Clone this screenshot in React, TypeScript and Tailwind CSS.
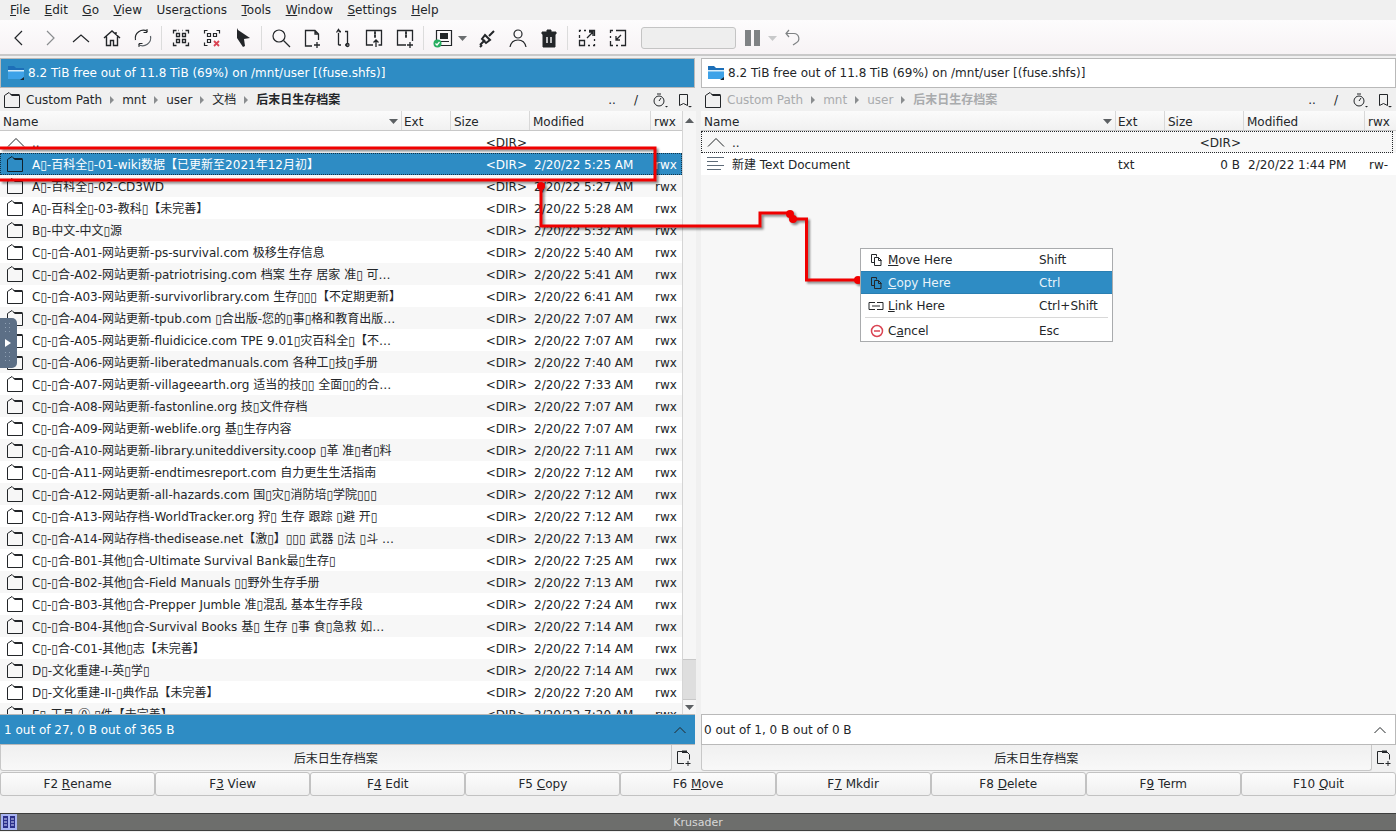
// App.tsx - Krusader window with a drag and drop menu
import type { ReactNode } from 'react';

const leftFiles = [
  ['A▯-百科全▯-01-wiki数据【已更新至2021年12月初】', '5:25'],
  ['A▯-百科全▯-02-CD3WD', '5:27'],
  ['A▯-百科全▯-03-教科▯【未完善】', '5:28'],
  ['B▯-中文-中文▯源', '5:32'],
  ['C▯-▯合-A01-网站更新-ps-survival.com 极移生存信息', '5:40'],
  ['C▯-▯合-A02-网站更新-patriotrising.com 档案 生存 居家 准▯ 可…', '5:41'],
  ['C▯-▯合-A03-网站更新-survivorlibrary.com 生存▯▯▯【不定期更新】', '6:41'],
  ['C▯-▯合-A04-网站更新-tpub.com ▯合出版-您的▯事▯格和教育出版…', '7:07'],
  ['C▯-▯合-A05-网站更新-fluidicice.com TPE 9.01▯灾百科全▯【不…', '7:07'],
  ['C▯-▯合-A06-网站更新-liberatedmanuals.com 各种工▯技▯手册', '7:40'],
  ['C▯-▯合-A07-网站更新-villageearth.org 适当的技▯▯ 全面▯▯的合…', '7:33'],
  ['C▯-▯合-A08-网站更新-fastonline.org 技▯文件存档', '7:07'],
  ['C▯-▯合-A09-网站更新-weblife.org 基▯生存内容', '7:07'],
  ['C▯-▯合-A10-网站更新-library.uniteddiversity.coop ▯革 准▯者▯料', '7:11'],
  ['C▯-▯合-A11-网站更新-endtimesreport.com 自力更生生活指南', '7:12'],
  ['C▯-▯合-A12-网站更新-all-hazards.com 国▯灾▯消防培▯学院▯▯▯', '7:12'],
  ['C▯-▯合-A13-网站存档-WorldTracker.org 狩▯ 生存 跟踪 ▯避 开▯', '7:12'],
  ['C▯-▯合-A14-网站存档-thedisease.net【激▯】▯▯▯ 武器 ▯法 ▯斗 …', '7:13'],
  ['C▯-▯合-B01-其他▯合-Ultimate Survival Bank最▯生存▯', '7:25'],
  ['C▯-▯合-B02-其他▯合-Field Manuals ▯▯野外生存手册', '7:13'],
  ['C▯-▯合-B03-其他▯合-Prepper Jumble 准▯混乱 基本生存手段', '7:24'],
  ['C▯-▯合-B04-其他▯合-Survival Books 基▯ 生存 ▯事 食▯急救 如…', '7:14'],
  ['C▯-▯合-C01-其他▯志【未完善】', '7:14'],
  ['D▯-文化重建-I-英▯学▯', '7:14'],
  ['D▯-文化重建-II-▯典作品【未完善】', '7:20'],
  ['E▯-工具 ⓪ ▯件【未完善】', '7:20'],
];

function Svg({ w = 22, h = 22, children }: { w?: number; h?: number; children: ReactNode }) {
  return (
    <svg width={w} height={h} viewBox={`0 0 ${w} ${h}`} fill="none" stroke="#232629" strokeWidth="1" className="shrink-0">
      {children}
    </svg>
  );
}

function FolderIcon({ color = '#232629' }: { color?: string }) {
  return (
    <svg width="16" height="16" viewBox="0 0 16 16" fill="none" stroke={color} className="shrink-0">
      <path d="M.5 15.5V3.5L5 .5l3 3h7.5v12z" />
      <path d="M6 2h9.5v2H8z" fill={color} stroke="none" />
    </svg>
  );
}

function BlueFolder() {
  return (
    <svg width="18" height="18" viewBox="0 0 18 18" className="shrink-0">
      <path d="M1 2h6l2 2h8v3H1z" fill="#1d6fb8" />
      <path d="M1 6h16v9H1z" fill="#3da2e8" />
      <path d="M1 6h16v1.5H1z" fill="#d6ecfa" />
      <path d="M13 16l4-3v3z" fill="#1c2730" />
    </svg>
  );
}

function Up() {
  return (
    <svg width="18" height="10" viewBox="0 0 18 10" fill="none" stroke="#232629" className="shrink-0">
      <path d="M1 9.5L9 1.5l8 8" />
    </svg>
  );
}

function UpSmall() {
  return (
    <svg width="12" height="8" viewBox="0 0 12 8" fill="none" stroke="#232629" className="shrink-0">
      <path d="M.5 7L6 1.500 11.500 7" />
    </svg>
  );
}

const toolIcons: Record<string, ReactNode> = {
  back: <path d="M14 4L7 11l7 7" strokeWidth="1.2" />,
  forward: <path d="M8 4l7 7-7 7" stroke="#8a8d8f" strokeWidth="1.2" />,
  up: <path d="M3 15l8-7 8 7" strokeWidth="1.2" />,
  home: <path d="M3 11l8-7 8 7M5.5 9.5v9h4v-5h3v5h4v-9M15 5v3" strokeWidth="1.4" />,
  reload: <><path d="M3.5 13a8 8 0 0 1 12-8.500" strokeWidth="1.2" /><path d="M18.500 9a8 8 0 0 1-12 8.500" stroke="#5a6066" strokeWidth="1.2" /><path d="M15 2v3.500h-3.500M7 20v-3.500h3.500" /></>,
  select: <path d="M3.500 6.500v-3h3M15.500 3.500h3v3M3.500 15.500v3h3M18.500 15.500v3h-3M9 3.500h-.5M13 3.500h-.5M6.500 6.500h3v3h-3zM12.500 6.500h3v3h-3zM6.500 12.500h3v3h-3zM12.500 12.500h3v3h-3z" strokeWidth="1.3" />,
  unselect: <><path d="M3.500 6.500v-3h3M15.500 3.500h3v3M3.500 15.500v3h3M6.500 6.500h3v3h-3zM12.500 6.500h3v3h-3zM6.500 12.500h3v3h-3z" strokeWidth="1.2" /><path d="M13 14l5 5m0-5l-5 5" stroke="#da4453" strokeWidth="1.800" /></>,
  invert: <path d="M5 1l1 2 12 8-6 1 1 7-2 1-6-9z" fill="#232629" stroke="none" />,
  search: <><circle cx="9" cy="9" r="6" strokeWidth="1.2" /><path d="M13.5 13.5L20 20" strokeWidth="1.2" /></>,
  newfile: <path d="M11 19H4.500V3.500H14L17.500 7v6M14 3.500V7h3.500M16 15v6M13 18h6" strokeWidth="1.3" />,
  sync: <path d="M6.500 4.500H9M13 4.500h2.500V16M6.500 6v12M6.500 18H9M13 18h2.500M4.500 5.500l2-3 2 3M15.500 19.500a1.500 1.500 0 1 0 0-3 1.500 1.500 0 1 0 0 3z" strokeWidth="1.3" />,
  packup: <path d="M10 18H3.500V3.500h15V18h-3M12 4v7M11 6h2M11 9h2M13 20v-7M10.500 15.500L13 13l2.500 2.500" strokeWidth="1.3" />,
  packadd: <path d="M12 18H3.500V3.500h15V14M12 4v7M11 6h2M11 9h2M16 15v6M13 18h6" strokeWidth="1.3" />,
  mount: <><path d="M4.500 3.500h15v15h-15z" strokeWidth="1.2" /><path d="M8 6h8v6h-8z" fill="#232629" stroke="none" /><path d="M7 14.500h10" /><circle cx="5.500" cy="16.500" r="4" fill="#27ae60" stroke="none" /><path d="M3.500 16.500l1.500 1.500 2.500-3" stroke="#fff" strokeWidth="1.200" /></>,
  plug: <path d="M18 4l-5 5M4 18l5-5M9 8l5 5-4 3-4-4zM6 18l-2 2" strokeWidth="2" />,
  user: <><circle cx="11" cy="7" r="4" strokeWidth="1.200" /><path d="M3 20c1-5 4-7 8-7s7 2 8 7" strokeWidth="1.200" /></>,
  trash: <><path d="M4 5h14v2H4zM9 3h4v2H9z" fill="#232629" /><path d="M5 7h12v13H5z" fill="#232629" /><path d="M9 10v6M13 10v6" stroke="#fff" strokeWidth="1.400" /></>,
  expand: <path d="M3.500 5V3.500H5M8 3.500h2M13 3.500h5.500V9M18.500 12v2M18.500 17v1.500H17M3.500 8v3M3.500 13.500h5v5h-5zM11 11l6-6M13 5h4v4M12 18.500h2" strokeWidth="1.300" />,
  shrink: <path d="M6 3.500H3.500V6M3.500 9v2M3.500 14v4.500H6M9 18.500h2M9 3.500h9.500v15H14M14 8l-5 5M9 9v4h4" strokeWidth="1.300" />,
};

function ToolIcon({ name }: { name: string }) {
  return (
    <div className="w-[31px] h-[24px] flex items-center justify-center shrink-0">
      <Svg>{toolIcons[name]}</Svg>
    </div>
  );
}

const Sep = () => (
  <div className="w-[7px] h-[24px] flex justify-center shrink-0">
    <div className="w-px h-full bg-[#dcdcdc]" />
  </div>
);

const Caret = ({ color = '#6b6e70' }: { color?: string }) => (
  <svg width="9" height="5" viewBox="0 0 9 5" className="shrink-0">
    <path d="M0 0h9L4.500 5z" fill={color} />
  </svg>
);

function Toolbar() {
  return (
    <div className="h-[36px] mt-[1px] pt-[2px] flex items-center pl-[3px] bg-gradient-to-b from-[#fdfcfd] to-[#f7f3f5] border-b-2 border-[#c9c9c9]">
      <ToolIcon name="back" />
      <ToolIcon name="forward" />
      <ToolIcon name="up" />
      <ToolIcon name="home" />
      <ToolIcon name="reload" />
      <Sep />
      <ToolIcon name="select" />
      <ToolIcon name="unselect" />
      <ToolIcon name="invert" />
      <Sep />
      <ToolIcon name="search" />
      <ToolIcon name="newfile" />
      <ToolIcon name="sync" />
      <ToolIcon name="packup" />
      <ToolIcon name="packadd" />
      <Sep />
      <ToolIcon name="mount" />
      <div className="w-[9px] flex justify-start shrink-0"><Caret /></div>
      <div className="w-[4px]" />
      <ToolIcon name="plug" />
      <ToolIcon name="user" />
      <ToolIcon name="trash" />
      <Sep />
      <ToolIcon name="expand" />
      <ToolIcon name="shrink" />
      <div className="w-[95px] h-[22px] ml-[8px] rounded-[3px] border border-[#c4c4c4] bg-[#eeeeee]" />
      <div className="ml-[9px] flex gap-[3px]">
        <div className="w-[6px] h-[16px] bg-[#7f8284]" />
        <div className="w-[6px] h-[16px] bg-[#7f8284]" />
      </div>
      <div className="ml-[8px]"><Caret color="#c8c9ca" /></div>
      <div className="ml-[5px]">
        <Svg>
          <path d="M7 3L4 6.500 7 10M4.500 6.500H12a5 5 0 0 1 2 9.500L11 18" stroke="#7f8284" strokeWidth="1.200" />
        </Svg>
      </div>
    </div>
  );
}

function PathBar({ inactive }: { inactive?: boolean }) {
  const tone = inactive ? 'text-[#a9abad]' : 'text-[#232629]';
  const crumbs = inactive ? ['Custom Path', 'mnt', 'user'] : ['Custom Path', 'mnt', 'user', '文档'];
  return (
    <div className="h-[23px] flex items-center pl-[4px] shrink-0">
      <FolderIcon />
      <div className={`flex items-center ml-[6px] ${tone}`}>
        {crumbs.map((c) => (
          <span key={c} className="flex items-center">
            {c}
            <span className="mx-[8px] w-0 h-0 border-y-[4px] border-y-transparent border-l-[4px] border-l-[#8a8d8f]" />
          </span>
        ))}
        <span className={`font-bold ${inactive ? 'text-[#a9abad]' : 'text-[#232629]'}`}>后末日生存档案</span>
      </div>
      <div className="ml-auto flex items-center text-[#232629]">
        <span className="w-[24px] text-center">..</span>
        <span className="w-[24px] text-center">/</span>
        <span className="w-[24px] flex justify-center">
          <svg width="16" height="16" viewBox="0 0 16 16" fill="none" stroke="#232629">
            <circle cx="7" cy="9" r="5" />
            <path d="M5 2h4M7 9l2-3" />
            <path d="M13 14h3l-1.500 1.500z" fill="#232629" stroke="none" />
          </svg>
        </span>
        <span className="w-[24px] flex justify-center">
          <svg width="16" height="16" viewBox="0 0 16 16" fill="none" stroke="#232629">
            <path d="M3.500 2.500h8v11l-4-2-4 2z" />
            <path d="M12 14h4l-2 1.500z" fill="#232629" stroke="none" />
          </svg>
        </span>
      </div>
    </div>
  );
}

function Headers({ nameW }: { nameW: number }) {
  return (
    <div className="h-[20px] flex shrink-0 bg-gradient-to-b from-[#fbfbfb] to-[#f1f1f1] border-b border-[#c8c8c8] text-[#232629]">
      <div style={{ width: nameW }} className="flex items-center justify-between pt-[2px] pl-[3px] pr-[3px] border-r border-[#d8d8d8]">
        Name
        <Caret color="#5c6063" />
      </div>
      <div className="w-[49px] pl-[2px] pt-[2px] flex items-center border-r border-[#d8d8d8]">Ext</div>
      <div className="w-[79px] pl-[3px] pt-[2px] flex items-center border-r border-[#d8d8d8]">Size</div>
      <div className="w-[121px] pl-[3px] pt-[2px] flex items-center border-r border-[#d8d8d8]">Modified</div>
      <div className="flex-1 pl-[3px] pt-[2px] flex items-center">rwx</div>
    </div>
  );
}

function Row({ i, name, time, selected }: { i: number; name: string; time: string; selected?: boolean }) {
  const bg = selected
    ? 'bg-[#2e8cc4] text-white outline-1 outline-dotted outline-offset-[-1px] outline-[#12344a]'
    : i % 2 === 0
      ? 'bg-[#f7f7f7] text-[#232629]'
      : 'bg-white text-[#232629]';
  return (
    <div className={`h-[22px] flex items-center shrink-0 ${bg}`}>
      <div className="w-[402px] flex items-center pl-[7px] shrink-0">
        <FolderIcon color={selected ? '#10222e' : '#232629'} />
        <span className="ml-[9px] pt-[2px] whitespace-nowrap">{name}</span>
      </div>
      <div className="w-[49px] shrink-0" />
      <div className="w-[79px] text-right pr-[3px] pt-[2px] shrink-0">&lt;DIR&gt;</div>
      <div className="w-[121px] pl-[4px] pt-[2px] shrink-0 whitespace-nowrap">2/20/22 {time} AM</div>
      <div className="flex-1 pl-[4px] pt-[2px]">rwx</div>
    </div>
  );
}

function LeftPanel() {
  return (
    <div className="w-[696px] flex flex-col shrink-0">
      <div className="h-[30px] flex items-center pl-[6px] gap-[3px] bg-[#2e8cc4] text-white border border-[#b9b9b9] mr-[1px] shrink-0">
        <BlueFolder />
        <span>8.2 TiB free out of 11.8 TiB (69%) on /mnt/user [(fuse.shfs)]</span>
      </div>
      <PathBar />
      <div className="flex-1 flex min-h-0">
        <div className="flex-1 flex flex-col min-w-0">
          <Headers nameW={402} />
          <div className="flex-1 bg-white overflow-hidden flex flex-col">
            <div className="h-[22px] flex items-center shrink-0 bg-white">
              <div className="w-[402px] flex items-center pl-[7px] shrink-0">
                <Up />
                <span className="ml-[7px] pt-[2px]">..</span>
              </div>
              <div className="w-[49px] shrink-0" />
              <div className="w-[79px] text-right pr-[3px] pt-[2px] shrink-0">&lt;DIR&gt;</div>
            </div>
            {leftFiles.map(([n, t], i) => (
              <Row key={n} i={i + 1} name={n} time={t} selected={i === 0} />
            ))}
          </div>
        </div>
        <div className="w-[14px] flex flex-col bg-[#f6f6f6] border-l border-[#d5d5d5] shrink-0">
          <div className="h-[20px] flex items-center justify-center rotate-180"><Caret color="#5c6063" /></div>
          <div className="flex-1" />
          <div className="h-[41px] bg-[#dedede] border-y border-[#c8c8c8]" />
          <div className="h-[14px] flex items-center justify-center"><Caret color="#5c6063" /></div>
        </div>
      </div>
      <div className="h-[31px] flex items-center justify-between pl-[4px] pr-[9px] bg-[#2e8cc4] text-white border-y border-[#b9b9b9] mr-[1px] shrink-0">
        <span className="pt-[1px]">1 out of 27, 0 B out of 365 B</span>
        <UpSmall />
      </div>
    </div>
  );
}

function RightPanel() {
  return (
    <div className="flex-1 flex flex-col min-w-0">
      <div className="h-[30px] flex items-center pl-[5px] gap-[3px] bg-white text-[#232629] border border-[#b9b9b9] shrink-0">
        <BlueFolder />
        <span>8.2 TiB free out of 11.8 TiB (69%) on /mnt/user [(fuse.shfs)]</span>
      </div>
      <PathBar inactive />
      <Headers nameW={415} />
      <div className="flex-1 bg-[#f7f7f7] text-[#232629] flex flex-col">
        <div className="h-[22px] flex items-center shrink-0 outline-1 outline-dotted outline-offset-[-1px] outline-[#232629] mr-[3px]">
          <div className="w-[415px] flex items-center pl-[6px] shrink-0">
            <Up />
            <span className="ml-[7px] pt-[2px]">..</span>
          </div>
          <div className="w-[49px] shrink-0" />
          <div className="w-[79px] text-right pr-[3px] pt-[2px] shrink-0">&lt;DIR&gt;</div>
        </div>
        <div className="h-[22px] flex items-center shrink-0 bg-white">
          <div className="w-[415px] flex items-center pl-[6px] shrink-0">
            <svg width="18" height="16" viewBox="0 0 18 16" stroke="#5e6b78" fill="none" className="shrink-0">
              <path d="M0 1.500h17M0 5.500h11M0 9.500h17M0 13.500h14" />
            </svg>
            <span className="ml-[7px] pt-[2px]">新建 Text Document</span>
          </div>
          <div className="w-[49px] pl-[2px] pt-[2px] shrink-0">txt</div>
          <div className="w-[79px] text-right pr-[4px] pt-[2px] shrink-0">0 B</div>
          <div className="w-[121px] pl-[4px] pt-[2px] shrink-0">2/20/22 1:44 PM</div>
          <div className="flex-1 pl-[4px] pt-[2px]">rw-</div>
        </div>
      </div>
      <div className="h-[31px] flex items-center justify-between pl-[2px] pr-[9px] bg-white text-[#232629] border border-[#b9b9b9] shrink-0">
        <span className="pt-[1px]">0 out of 1, 0 B out of 0 B</span>
        <UpSmall />
      </div>
    </div>
  );
}

function CmdBox() {
  const icon = (
    <svg width="16" height="16" viewBox="0 0 16 16" fill="none" stroke="#232629">
      <path d="M8 13.500H1.500V1.500h9l3 3v5" />
      <path d="M6 0.500h5V3H6z" fill="#232629" stroke="none" />
      <path d="M12 11v5M9.500 13.500h5" />
    </svg>
  );
  return (
    <div className="flex-1 h-full flex min-w-0">
      <div className="flex-1 flex items-center justify-center pt-[2px] rounded-b-[3px] border border-t-0 border-[#c8c8c8] bg-gradient-to-b from-[#f0f0f0] to-[#f8f8f8] text-[#232629]">
        后末日生存档案
      </div>
      <div className="w-[24px] flex items-center justify-center shrink-0">{icon}</div>
    </div>
  );
}

const fnKeys: [string, string, string][] = [
  ['F2 ', 'R', 'ename'],
  ['F', '3', ' View'],
  ['F', '4', ' Edit'],
  ['F5 ', 'C', 'opy'],
  ['F6 ', 'M', 'ove'],
  ['F', '7', ' Mkdir'],
  ['F8 ', 'D', 'elete'],
  ['F', '9', ' Term'],
  ['F10 ', 'Q', 'uit'],
];

function ContextMenu() {
  return (
    <div className="absolute left-[860px] top-[248px] w-[253px] h-[94px] bg-white border border-[#a9abad] text-[#232629]">
      <MenuItem label="M" rest="ove Here" keys="Shift" icon="copy" top />
      <MenuItem label="C" rest="opy Here" keys="Ctrl" icon="copy" active />
      <MenuItem label="L" rest="ink Here" keys="Ctrl+Shift" icon="link" />
      <div className="h-px bg-[#d8d8d8] mx-[4px] mb-[1px]" />
      <MenuItem first="C" label="a" rest="ncel" keys="Esc" icon="cancel" />
    </div>
  );
}

function MenuItem({ first, label, rest, keys, icon, active, top }: { first?: string; label: string; rest: string; keys: string; icon: string; active?: boolean; top?: boolean }) {
  return (
    <div className={`${top ? 'h-[22px] pb-[1px]' : 'h-[23px]'} flex items-center ${active ? 'bg-[#2e8cc4] text-[#e8f3fa] border-y border-[#2a7fb2]' : ''}`}>
      <div className="w-[27px] flex justify-center pl-[4px] shrink-0">
        {icon === 'copy' && (
          <svg width="14" height="14" viewBox="0 0 14 14" fill="none" stroke="#232629">
            <path d="M1.500 1.500h5l0 2M4.500 4.500h4l2.500 2.500v5.500h-6.500zM1.500 1.500v8h3" />
            <path d="M8.500 4.500v3h3" />
          </svg>
        )}
        {icon === 'link' && (
          <svg width="16" height="10" viewBox="0 0 16 10" fill="none" stroke="#232629" className="-ml-[2px]">
            <path d="M7 1.500H1v7h6M9 1.500h6v7H9M4 5h8" />
          </svg>
        )}
        {icon === 'cancel' && (
          <svg width="14" height="14" viewBox="0 0 14 14" fill="none" stroke="#da4453" strokeWidth="1.500">
            <circle cx="7" cy="7" r="5.500" />
            <path d="M4 7h6" />
          </svg>
        )}
      </div>
      <div className="w-[151px] shrink-0">
        {first}
        <u>{label}</u>
        {rest}
      </div>
      <div>{keys}</div>
    </div>
  );
}

function DragOverlay() {
  return (
    <svg width="1396" height="832" viewBox="0 0 1396 832" fill="none" className="absolute inset-0 pointer-events-none drop-shadow-[2px_2px_1px_rgba(0,0,0,0.45)]">
      <path d="M0 148H655V180H0" stroke="#f00000" strokeWidth="3" />
      <path d="M541 185V226H760V213H790" stroke="#f00000" strokeWidth="3" />
      <path d="M794 219H806.500V280H860" stroke="#f00000" strokeWidth="3" />
      <circle cx="541" cy="186" r="4" fill="#f00000" />
      <circle cx="790" cy="214" r="4" fill="#f00000" />
      <circle cx="793" cy="219" r="4" fill="#f00000" />
      <circle cx="858" cy="280" r="4" fill="#f00000" />
      <path d="M860 280h12" stroke="#f00000" strokeWidth="3" />
    </svg>
  );
}

function SideHandle() {
  return (
    <div className="absolute left-0 top-[318px] w-[17px] h-[50px] rounded-r-[5px] bg-[#5c6f86] flex items-center justify-center">
      <svg width="17" height="50" viewBox="0 0 17 50">
        <path d="M5 5h1v1H5zM9 5h1v1H9zM5 9h1v1H5zM9 9h1v1H9zM5 13h1v1H5zM9 13h1v1H9zM5 34h1v1H5zM9 34h1v1H9zM5 38h1v1H5zM9 38h1v1H9zM5 42h1v1H5zM9 42h1v1H9z" fill="#8fa0b3" />
        <path d="M5 21l6 4-6 4z" fill="#fff" />
      </svg>
    </div>
  );
}

export default function App() {
  return (
    <div className="relative w-[1396px] h-[832px] overflow-hidden flex flex-col bg-[#f0f0f0] text-[12px] leading-none text-[#232629] font-['DejaVu_Sans','Noto_Sans_CJK_SC',sans-serif]">
      <div className="h-[19px] pt-[1px] flex items-center pl-[10px] gap-[14.5px] shrink-0">
        <span><u>F</u>ile</span>
        <span><u>E</u>dit</span>
        <span><u>G</u>o</span>
        <span><u>V</u>iew</span>
        <span>User<u>a</u>ctions</span>
        <span><u>T</u>ools</span>
        <span><u>W</u>indow</span>
        <span><u>S</u>ettings</span>
        <span><u>H</u>elp</span>
      </div>
      <Toolbar />
      <div className="h-[687px] flex mt-[2px] shrink-0">
        <LeftPanel />
        <div className="w-[5px] shrink-0" />
        <RightPanel />
      </div>
      <div className="h-[26px] flex gap-[5px] shrink-0">
        <CmdBox />
        <CmdBox />
      </div>
      <div className="h-[24px] flex mt-[1px] shrink-0">
        {fnKeys.map(([a, u, b]) => (
          <div key={a + u} className="flex-1 flex items-center justify-center whitespace-pre rounded-[3px] border border-[#c2c2c2] bg-gradient-to-b from-[#fcfcfc] to-[#f0f0f0]">
            {a}<u>{u}</u>{b}
          </div>
        ))}
      </div>
      <div className="h-[18px] mt-[17px] flex items-center justify-center relative bg-[#6d6e6c] border-y border-[#3d3e3d] text-[#d8d8d8] text-[11px] shrink-0">
        <svg width="16" height="16" viewBox="0 0 16 16" className="absolute left-[1px] top-0">
          <path d="M0 0h16v16H0z" fill="#a9b4f2" />
          <path d="M2 2h5v12H2zM9 2h5v12H9z" fill="#2b2f8a" />
          <path d="M3 5h3M3 8h3M3 11h3M10 5h3M10 8h3M10 11h3" stroke="#d6dbff" />
        </svg>
        Krusader
      </div>
      <DragOverlay />
      <SideHandle />
      <ContextMenu />
    </div>
  );
}
